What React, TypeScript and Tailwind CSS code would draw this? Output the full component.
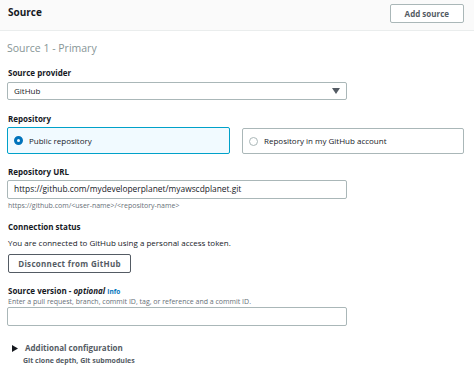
import { useState } from 'react';

export default function App() {
  const [repoType, setRepoType] = useState<'public' | 'account'>('public');

  const tile = (active: boolean) =>
    active ? 'bg-[#f1faff] border-[#00a1c9]' : 'bg-white border-[#aab7b8]';
  const dot = (active: boolean) =>
    active ? 'border-[3px] border-[#0073bb]' : 'border border-[#aab7b8]';

  return (
    <div className="w-[474px] h-[379px] bg-white font-['Open_Sans',sans-serif] text-[#16191f] overflow-hidden">
      {/* Header */}
      <div className="h-[31px] bg-[#fafafa] border-b border-[#eaeded] flex items-start justify-between pl-2 pr-[10px]">
        <h2 className="mt-[5px] text-[10px] leading-[14px] font-bold">Source</h2>
        <button className="mt-[4px] h-[19px] px-[14px] border border-[#aab7b8] rounded-[2px] bg-white text-[8px] leading-none font-bold text-[#545b64]">
          Add source
        </button>
      </div>

      <div className="px-[7px]">
        <div className="mt-[10px] text-[10.5px] leading-[14px] text-[#879596]">Source 1 - Primary</div>

        {/* Source provider */}
        <div className="mt-[12px] text-[8px] leading-[11px] font-bold pl-px">Source provider</div>
        <div className="mt-[4px] w-[340px] h-[18px] border border-[#aab7b8] rounded-[2px] flex items-center justify-between px-[6px]">
          <span className="text-[8px] leading-none font-medium">GitHub</span>
          <svg width="8" height="6" viewBox="0 0 8 6">
            <path d="M0 0h8L4 6z" fill="#545b64" />
          </svg>
        </div>

        {/* Repository */}
        <div className="mt-[13px] text-[8px] leading-[11px] font-bold pl-px">Repository</div>
        <div className="mt-[3px] grid grid-cols-[223px_222px] gap-[12px] items-start">
          <button
            onClick={() => setRepoType('public')}
            className={`h-[27px] flex items-center gap-[6px] px-[6px] rounded-[2px] border text-left ${tile(repoType === 'public')}`}
          >
            <span className={`w-[9px] h-[9px] rounded-full flex-shrink-0 ${dot(repoType === 'public')}`}></span>
            <span className="text-[8px] leading-none font-medium">Public repository</span>
          </button>
          <button
            onClick={() => setRepoType('account')}
            className={`h-[26px] mt-px flex items-center gap-[6px] px-[6px] rounded-[2px] border text-left ${tile(repoType === 'account')}`}
          >
            <span className={`w-[9px] h-[9px] rounded-full flex-shrink-0 ${dot(repoType === 'account')}`}></span>
            <span className="text-[8px] leading-none font-medium">Repository in my GitHub account</span>
          </button>
        </div>

        {/* Repository URL */}
        <div className="mt-[12px] text-[8px] leading-[11px] font-bold pl-px">Repository URL</div>
        <div className="mt-[3px] w-[340px] h-[19px] border border-[#aab7b8] rounded-[2px] flex items-center px-[6px]">
          <span className="text-[8.4px] leading-none font-medium whitespace-nowrap">https://github.com/mydeveloperplanet/myawscdplanet.git</span>
        </div>
        <div className="mt-[2px] text-[7px] leading-[9px] text-[#687078] pl-px">https://github.com/&lt;user-name&gt;/&lt;repository-name&gt;</div>

        {/* Connection status */}
        <div className="mt-[11px] text-[8px] leading-[11px] font-bold pl-px">Connection status</div>
        <div className="mt-[5px] text-[8px] leading-[11px] font-medium pl-px">You are connected to GitHub using a personal access token.</div>
        <button className="mt-[6px] ml-px w-[123px] h-[19px] border border-[#545b64] rounded-[2px] bg-white text-[8px] leading-none font-bold text-[#545b64] tracking-[0.3px]">
          Disconnect from GitHub
        </button>

        {/* Source version */}
        <div className="mt-[12px] text-[8px] leading-[11px] font-bold pl-px">
          Source version - <span className="italic">optional</span>{' '}
          <span className="text-[#0073bb] text-[6.5px]">Info</span>
        </div>
        <div className="text-[7px] leading-[9px] text-[#687078] pl-px">
          Enter a pull request, branch, commit ID, tag, or reference and a commit ID.
        </div>
        <div className="mt-[1px] w-[340px] h-[19px] border border-[#aab7b8] rounded-[2px]"></div>

        {/* Additional configuration */}
        <div className="mt-[16px] flex items-center gap-[7px] pl-[5px]">
          <svg width="6" height="7" viewBox="0 0 6 7">
            <path d="M0 0l6 3.5L0 7z" fill="#16191f" />
          </svg>
          <span className="text-[8px] leading-[12px] font-bold text-[#545b64]">Additional configuration</span>
        </div>
        <div className="mt-[2px] pl-[16px] text-[7px] leading-[9px] font-bold text-[#545b64]">Git clone depth, Git submodules</div>
      </div>
    </div>
  );
}
